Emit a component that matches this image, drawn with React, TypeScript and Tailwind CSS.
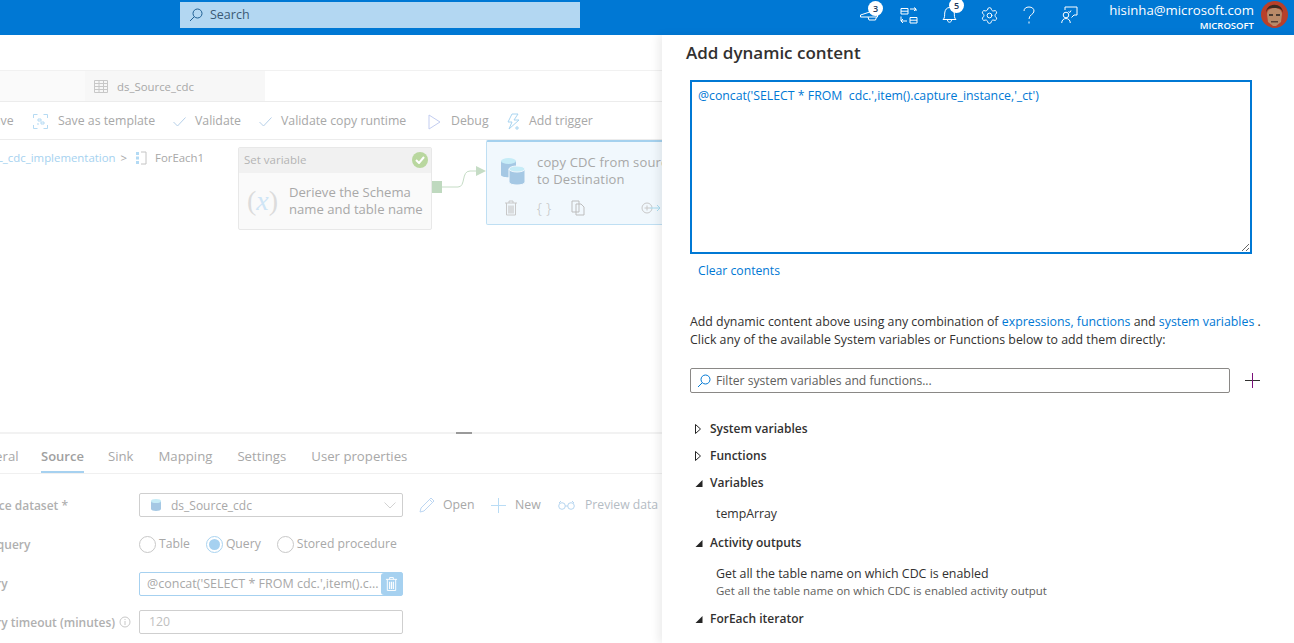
import type { ReactNode } from "react";
import { Settings } from "lucide-react";

const thin = { fill: "none", stroke: "currentColor", strokeWidth: 1 };

function Tool(props: { icon: ReactNode; label: string; className?: string }) {
  return (
    <div className={"flex items-center gap-[9px] " + (props.className || "")}>
      {props.icon}
      <span>{props.label}</span>
    </div>
  );
}

function Radio(props: { label: string; on?: boolean }) {
  return (
    <div className="flex items-center gap-[3px]">
      <span
        className={
          "w-[17px] h-[17px] rounded-full border flex items-center justify-center " +
          (props.on ? "border-[#a9d3f0]" : "border-[#c8c8c8]")
        }
      >
        {props.on && <span className="w-[11px] h-[11px] rounded-full bg-[#a6d1f0]" />}
      </span>
      <span>{props.label}</span>
    </div>
  );
}

function TrashIcon(props: { className?: string }) {
  return (
    <svg viewBox="0 0 14 16" className={props.className} fill="none" stroke="currentColor">
      <path d="M1 3h12M5 3V1h4v2M2.500 3v12h9V3" />
      <path d="M5 5.500v8M7 5.500v8M9 5.500v8" strokeWidth="1.200" />
    </svg>
  );
}

function TreeRow(props: { label: string; open?: boolean; className?: string }) {
  return (
    <div className={"flex items-center h-[20px] " + (props.className || "")}>
      <span className="w-[17px] flex justify-start">
        {props.open ? (
          <svg width="10" height="10" viewBox="0 0 10 10" className="ml-[1px]">
            <path d="M8.500 2v7H1.500z" fill="#252525" />
          </svg>
        ) : (
          <svg width="10" height="10" viewBox="0 0 10 10">
            <path d="M2.500 .5l5 4.500-5 4.500z" fill="none" stroke="#252525" />
          </svg>
        )}
      </span>
      <span className="text-[12px] font-semibold text-[#323130]">{props.label}</span>
    </div>
  );
}

function Header() {
  return (
    <div className="h-[35px] bg-[#0078d4] flex items-start text-white shrink-0">
      <div className="ml-[180px] mt-[2px] w-[400px] h-[26px] bg-[#b3d7f2] flex items-center pl-[9px] gap-[7px] text-[#3b5a75] text-[12.500px]">
        <svg width="14" height="14" viewBox="0 0 14 14" fill="none" stroke="#1f5f94">
          <circle cx="8.500" cy="5.500" r="4.500" />
          <path d="M5.200 8.800 1 13" />
        </svg>
        <span className="pt-[1px]">Search</span>
      </div>
      <div className="ml-[269px] flex items-center h-[30px]">
        <div className="w-[40px] flex justify-center relative">
          <svg width="18" height="12" viewBox="0 0 18 12" {...thin} stroke="white">
            <path d="M.5 6 17.500 .5v7.500H.5zM8 8l1 3h6.500l1-3" />
          </svg>
          <span className="absolute -top-[8px] left-[19px] w-[15px] h-[15px] rounded-full bg-white text-[#1b3a5c] text-[9px] font-semibold flex items-center justify-center">3</span>
        </div>
        <div className="w-[40px] flex justify-center">
          <svg width="18" height="17" viewBox="0 0 18 17" {...thin} stroke="white">
            <path d="M1 1.500h7v5.500H1zM1 4.200h7M10 2h6v2M14 .5 16 2l-2 2M10 10.500h7V16h-7zM10 13.200h7M1 9.500V14h6M3 12l-2 2 2 2" />
          </svg>
        </div>
        <div className="w-[40px] flex justify-center relative">
          <svg width="17" height="18" viewBox="0 0 17 18" {...thin} stroke="white">
            <path d="M2 13.500c2-1.500 1.500-4 1.700-6.500C4 3.500 6 1.500 8.500 1.500S13 3.500 13.300 7c.2 2.500-.3 5 1.700 6.500zM6.500 14c0 3 4 3 4 0" />
          </svg>
          <span className="absolute -top-[8px] left-[20px] w-[15px] h-[15px] rounded-full bg-white text-[#1b3a5c] text-[9px] font-semibold flex items-center justify-center">5</span>
        </div>
        <div className="w-[40px] flex justify-center">
          <Settings size={19} strokeWidth={1.2} color="white" />
        </div>
        <div className="w-[40px] flex justify-center">
          <svg width="12" height="18" viewBox="0 0 12 18" {...thin} stroke="white">
            <path d="M1 5c0-2.500 2-4 5-4s5 1.700 5 4c0 3.500-5 3.500-5 8M6 15.500v2" />
          </svg>
        </div>
        <div className="w-[40px] flex justify-center">
          <svg width="17" height="18" viewBox="0 0 17 18" {...thin} stroke="white">
            <path d="M4 4V1h12v8h-3l-2.500 2.500M10 4.500 8.800 6.500 7.500 5.500" />
            <circle cx="5" cy="9" r="2.800" />
            <path d="M.7 17c0-6 8.600-6 8.600 0" />
          </svg>
        </div>
      </div>
      <div className="ml-[20px] mt-[2px] flex flex-col items-end w-[145px]">
        <span className="text-[13.200px] leading-[17px] whitespace-nowrap">hisinha@microsoft.com</span>
        <span className="text-[9.500px] leading-[13px] font-semibold">MICROSOFT</span>
      </div>
      <svg width="27" height="27" viewBox="0 0 27 27" className="ml-[7px] mt-[1px]">
        <circle cx="13.500" cy="13.500" r="13.500" fill="#b8402a" />
        <path d="M6 13C6 5 21 5 21 13l-1 8-5 4h-3l-5-4z" fill="#b98a68" />
        <path d="M5 12C5 1 22 1 22 12c-1-4-3-5-8.500-5S6 8 5 12z" fill="#3a2a22" />
        <path d="M8 13h4v2H8zM15 13h4v2h-4z" fill="#4a3a30" />
        <path d="M10 20h7v1.500h-7z" fill="#5a4034" />
      </svg>
    </div>
  );
}

function Canvas() {
  return (
    <div className="relative h-[292px] text-[#a8a8a8]">
      <div className="absolute left-0 top-[9px] flex items-center text-[11.400px] leading-[18px] whitespace-nowrap w-[204px] justify-end">
        <span className="text-[#a6d2f0] shrink-0">L_cdc_implementation</span>
        <span className="ml-[5px] mr-[8px] shrink-0">&gt;</span>
        <svg width="12" height="14" viewBox="0 0 12 14" className="mr-[8px] shrink-0">
          <path d="M1 1h3v3H1zM1 5.500h3v3H1zM1 10h3v3H1z" fill="#b3daf4" />
          <path d="M6 1h5v12H6" fill="none" stroke="#c4c4c4" />
        </svg>
        <span className="shrink-0">ForEach1</span>
      </div>

      <div className="absolute left-[238px] top-[7px] w-[194px] h-[83px] border border-[#e8e8e8] rounded-[2px] bg-[#fafafa]">
        <div className="h-[25px] bg-[#f1f1f1] flex items-center justify-between pl-[5px] pr-[3px] pb-[2px] text-[11.500px] text-[#b4b4b4]">
          <span>Set variable</span>
          <span className="w-[16px] h-[16px] rounded-full bg-[#b9d79f] flex items-center justify-center">
            <svg width="10" height="8" viewBox="0 0 10 8" fill="none" stroke="white" strokeWidth="2">
              <path d="M1 4l3 3 5-6" />
            </svg>
          </span>
        </div>
        <div className="flex items-center pl-[8px] h-[56px]">
          <div className="w-[42px] text-[28px] font-['Liberation_Serif',serif] text-[#dcdcdc] whitespace-nowrap">
            (<span className="italic text-[#cfe5f6]">x</span>)
          </div>
          <div className="text-[13.100px] leading-[17px] text-[#a8a8a8] whitespace-nowrap">
            Derieve the Schema
            <br />
            name and table name
          </div>
        </div>
      </div>

      <span className="absolute left-[432px] top-[41px] w-[10px] h-[12px] bg-[#bfd9bf]" />
      <svg width="45" height="26" viewBox="0 0 45 26" className="absolute left-[442px] top-[25px]" fill="none">
        <path d="M0 22h16c8 0 3-16 12-16h6" stroke="#c5dcc5" />
        <path d="M34 1l10 5-10 5z" fill="#c5dcc5" />
      </svg>

      <div className="absolute left-[486px] top-0 w-[190px] h-[85px] bg-[#f1f8fd] border border-[#bfdff3] border-t-2 border-t-[#a5d1ee] rounded-[2px]">
        <div className="flex pl-[13px] pt-[12px]">
          <svg width="26" height="29" viewBox="0 0 26 29" className="mr-[11px] mt-[3px]">
            <path d="M1 4v14c0 3 15 3 15 0V4z" fill="#a5c8e4" />
            <ellipse cx="8.500" cy="4" rx="7.500" ry="3" fill="#c6ecf7" />
            <path d="M9 12v13c0 4 16 4 16 0V12z" fill="#a5c8e4" stroke="#f1f8fd" />
            <ellipse cx="17" cy="12" rx="8" ry="3" fill="#c6ecf7" stroke="#f1f8fd" />
          </svg>
          <div className="text-[13px] leading-[17px] tracking-[0.15px] whitespace-nowrap text-[#a8a8a8]">
            copy CDC from source
            <br />
            to Destination
          </div>
        </div>
        <div className="flex items-center pl-[17px] mt-[9px] text-[#c8c8c8]">
          <TrashIcon className="w-[14px] h-[16px]" />
          <span className="ml-[15px] w-[22px] text-[15px] font-light text-center text-[#c4c4c4]">{"{ }"}</span>
          <svg width="14" height="16" viewBox="0 0 14 16" className="ml-[16px]" fill="none" stroke="#bdbdbd">
            <path d="M1 1h7v11H1zM5 4h5l3 3v8H5z" fill="#f1f8fd" />
          </svg>
          <svg width="20" height="12" viewBox="0 0 20 12" className="ml-[56px]" fill="none">
            <circle cx="6" cy="6" r="5" stroke="#c8c8c8" />
            <path d="M3.500 6h6M6 3.500v5" stroke="#c8c8c8" />
            <path d="M9 6h10M16 3l3 3-3 3" stroke="#a8dcf0" />
          </svg>
        </div>
      </div>
    </div>
  );
}

function FormRow(props: { label: ReactNode; className: string; children: ReactNode }) {
  return (
    <div className={"flex items-center -ml-[28px] " + props.className}>
      <div className="w-[167px] shrink-0 font-semibold text-[12px] text-[#b0b0b0] whitespace-nowrap flex items-center">{props.label}</div>
      {props.children}
    </div>
  );
}

function LeftPane() {
  return (
    <div className="w-[662px] shrink-0 overflow-hidden text-[#a8a8a8] text-[12.300px]">
      <div className="h-[36px] border-b border-[#f1f1f1]" />
      <div className="h-[31px] flex border-b border-[#ececec]">
        <div className="w-[85px] bg-[#fafafa]" />
        <div className="w-[180px] bg-[#f7f7f7] flex items-center pl-[9px] gap-[9px] text-[11.400px]">
          <svg width="14" height="13" viewBox="0 0 14 13" fill="none" stroke="#c8c8c8">
            <path d="M.5.5h13v12H.5zM.5 3.500h13M.5 6.500h13M.5 9.500h13M5 .5v12M9.500.5v12" />
          </svg>
          <span className="pt-[2px]">ds_Source_cdc</span>
        </div>
      </div>
      <div className="h-[38px] pt-[2px] flex items-center -ml-[13px] border-b border-[#ececec] whitespace-nowrap">
        <span className="w-[46px]">Save</span>
        <Tool
          icon={
            <svg width="15" height="15" viewBox="0 0 15 15" fill="none" stroke="#b5daf3">
              <path d="M.5 4V.5h4M10.500.5h4V4M14.500 11v3.500h-4M4.500 14.500h-4V11M5 5h3v2H5zM8 8h3v2H8zM4 10h2" />
            </svg>
          }
          label="Save as template"
          className="w-[140px] !gap-[10px]"
        />
        <Tool
          icon={
            <svg width="13" height="10" viewBox="0 0 13 10" fill="none" stroke="#b5cfe8">
              <path d="M.5 5l4 4 8-8.500" />
            </svg>
          }
          label="Validate"
          className="w-[86px]"
        />
        <Tool
          icon={
            <svg width="13" height="10" viewBox="0 0 13 10" fill="none" stroke="#b5cfe8">
              <path d="M.5 5l4 4 8-8.500" />
            </svg>
          }
          label="Validate copy runtime"
          className="w-[169px]"
        />
        <Tool
          icon={
            <svg width="13" height="16" viewBox="0 0 13 16" fill="none" stroke="#c3cdf0">
              <path d="M1 1l11 7-11 7z" />
            </svg>
          }
          label="Debug"
          className="w-[78px] !gap-[10px]"
        />
        <Tool
          icon={
            <svg width="15" height="18" viewBox="0 0 15 18" fill="none" stroke="#a8d4f0">
              <path d="M6 1h6L8 7h5L3 16l3-7H2zM11 13v4M9 15h4" />
            </svg>
          }
          label="Add trigger"
          className="!gap-[8px]"
        />
      </div>

      <Canvas />

      <div className="h-[2px] bg-[#f2f2f2] relative">
        <span className="absolute left-[456px] top-0 w-[16px] h-[2px] bg-[#9a9a9a]" />
      </div>
      <div className="h-[40px] flex items-end -ml-[30px] border-b border-[#f0f0f0] text-[13.200px] whitespace-nowrap">
        <span className="pb-[6px] w-[71px]">General</span>
        <span className="pb-[5px] mr-[24px] font-semibold text-[13px] text-[#a0a0a0] border-b-2 border-[#a6d1f0]">Source</span>
        <span className="pb-[6px] mr-[25px]">Sink</span>
        <span className="pb-[6px] mr-[25px]">Mapping</span>
        <span className="pb-[6px] mr-[25px]">Settings</span>
        <span className="pb-[6px]">User properties</span>
      </div>

      <div className="mt-[19px]">
        <FormRow label={<span className="pt-[1px]">Source dataset *</span>} className="h-[24px]">
          <div className="w-[264px] h-[24px] border border-[#cfcfcf] rounded-[2px] flex items-center pl-[11px] pr-[6px]">
            <svg width="10" height="12" viewBox="0 0 10 12">
              <path d="M0 2v8c0 2.500 10 2.500 10 0V2z" fill="#a5c8e4" />
              <ellipse cx="5" cy="2" rx="5" ry="2" fill="#c6ecf7" />
            </svg>
            <span className="ml-[10px] flex-1 text-[12px] pt-[1px]">ds_Source_cdc</span>
            <svg width="12" height="7" viewBox="0 0 12 7" fill="none" stroke="#d2d2d2">
              <path d="M.5.5 6 6 11.500.5" />
            </svg>
          </div>
          <Tool
            icon={
              <svg width="16" height="16" viewBox="0 0 16 16" fill="none" stroke="#bcd6f2">
                <path d="M1 15l1-4L12 1l3 3L5 14zM10.500 2.500l3 3" />
              </svg>
            }
            label="Open"
            className="ml-[16px] w-[72px] !gap-[8px] [&>span]:pt-[1px]"
          />
          <Tool
            icon={
              <svg width="15" height="15" viewBox="0 0 15 15" fill="none" stroke="#b9dcf5">
                <path d="M7.500 0v15M0 7.500h15" />
              </svg>
            }
            label="New"
            className="w-[67px] [&>span]:pt-[1px]"
          />
          <Tool
            icon={
              <svg width="17" height="10" viewBox="0 0 17 10" fill="none" stroke="#b5d5f0">
                <circle cx="4" cy="6" r="3.300" />
                <circle cx="13" cy="6" r="3.300" />
                <path d="M7.300 6h2.400M1 3l2-2M16 3l-2-2" />
              </svg>
            }
            label="Preview data"
            className="!gap-[10px] text-[#b4bcc4] text-[12.200px] [&>span]:pt-[1px]"
          />
        </FormRow>
        <FormRow label="Use query" className="h-[17px] mt-[19px]">
          <div className="flex gap-[16px] whitespace-nowrap text-[12.200px]">
            <Radio label="Table" />
            <Radio label="Query" on />
            <Radio label="Stored procedure" />
          </div>
        </FormRow>
        <FormRow label="Query" className="h-[24px] mt-[19px]">
          <div className="w-[264px] h-[24px] border border-[#a6d1f0] rounded-[2px] flex items-center pl-[7px] relative text-[12.500px]">
            <span className="whitespace-nowrap">@concat('SELECT * FROM cdc.',item().c...</span>
            <span className="absolute right-0 top-0 bottom-0 w-[21px] bg-[#a6d1f0] rounded-l-[3px] flex items-center justify-center text-white">
              <TrashIcon className="w-[13px] h-[16px]" />
            </span>
          </div>
        </FormRow>
        <FormRow
          label={
            <>
              <span className="pt-[1px]">Query timeout (minutes)</span>
              <svg width="12" height="12" viewBox="0 0 12 12" fill="none" stroke="#c8c8c8" className="ml-[4px]">
                <circle cx="6" cy="6" r="5" />
                <path d="M6 5v4M6 3v1" />
              </svg>
            </>
          }
          className="h-[24px] mt-[14px]"
        >
          <div className="w-[264px] h-[24px] border border-[#cfcfcf] rounded-[2px] flex items-center pl-[9px] text-[#c0c0c0]">120</div>
        </FormRow>
      </div>
    </div>
  );
}

function DynamicPanel() {
  return (
    <div className="flex-1 bg-white shadow-[-4px_0_8px_rgba(0,0,0,0.07)] relative pl-[28px] pr-[42px] text-[12.300px] text-[#323130]">
      <h2 className="ml-[-4px] mt-[7px] h-[24px] text-[17px] leading-[22px] font-semibold text-[#323130]">Add dynamic content</h2>
      <textarea
        readOnly
        defaultValue="@concat('SELECT * FROM  cdc.',item().capture_instance,'_ct')"
        className="block mt-[14px] w-[562px] h-[174px] border-2 border-[#0078d4] outline-none px-[6px] pt-[6px] pb-[4px] text-[12.300px] leading-[16px] text-[#0078d4]"
      />
      <div className="mt-[8px] ml-[8px] h-[18px] leading-[18px] text-[12.200px] text-[#0078d4]">Clear contents</div>
      <p className="mt-[33px] leading-[18px] whitespace-nowrap text-[12.350px]">
        Add dynamic content above using any combination of <span className="text-[#0078d4]">expressions, functions</span> and{" "}
        <span className="text-[#0078d4]">system variables</span> .
        <br />
        Click any of the available System variables or Functions below to add them directly:
      </p>
      <div className="flex items-center mt-[19px]">
        <div className="w-[540px] h-[25px] border border-[#8a8886] rounded-[2px] flex items-center pl-[6px] gap-[5px] text-[12.150px] text-[#605e5c]">
          <svg width="14" height="14" viewBox="0 0 14 14" fill="none" stroke="#0078d4">
            <circle cx="8.500" cy="5.500" r="4.500" />
            <path d="M5.200 8.800 1 13" />
          </svg>
          <span className="pt-[1px]">Filter system variables and functions...</span>
        </div>
        <svg width="15" height="15" viewBox="0 0 15 15" fill="none" className="ml-[15px]">
          <path d="M0 7.500h15" stroke="#323130" />
          <path d="M7.500 0v15" stroke="#7a0f7a" />
        </svg>
      </div>
      <div className="mt-[26px] ml-[3px]">
        <TreeRow label="System variables" />
        <TreeRow label="Functions" className="mt-[7px]" />
        <TreeRow label="Variables" open className="mt-[7px]" />
        <div className="ml-[23px] mt-[12px] h-[18px] leading-[18px]">tempArray</div>
        <TreeRow label="Activity outputs" open className="mt-[10px]" />
        <div className="ml-[23px] mt-[12px] leading-[18px] text-[12.400px]">Get all the table name on which CDC is enabled</div>
        <div className="ml-[23px] text-[11.450px] leading-[16px] text-[#605e5c]">Get all the table name on which CDC is enabled activity output</div>
        <TreeRow label="ForEach iterator" open className="mt-[10px]" />
      </div>
    </div>
  );
}

export default function App() {
  return (
    <div className="w-[1294px] h-[643px] overflow-hidden flex flex-col bg-white font-['Open_Sans',sans-serif]">
      <Header />
      <div className="flex flex-1 min-h-0">
        <LeftPane />
        <DynamicPanel />
      </div>
    </div>
  );
}
